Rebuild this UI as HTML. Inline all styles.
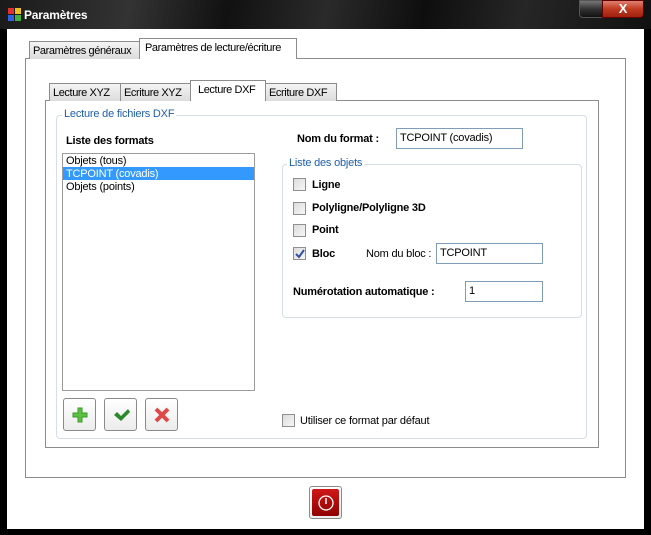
<!DOCTYPE html>
<html><head><meta charset="utf-8"><style>
*{margin:0;padding:0;box-sizing:border-box}
body{width:651px;height:535px;background:#000;position:relative;overflow:hidden;font-family:"Liberation Sans",sans-serif;font-size:11px;color:#000;letter-spacing:-0.2px}
.a{position:absolute}
.title{left:0;top:0;width:651px;height:29px;background:linear-gradient(100deg,#1a1a1a 0%,#333 20%,#111 35%,#2a2a2a 50%,#0e0e0e 65%,#262626 80%,#111 100%)}
.body{left:7px;top:29px;width:637px;height:500px;background:#fff}
.tab{border:1px solid #8c8c8c;border-bottom:none;background:linear-gradient(#f4f4f4,#dcdcdc);padding:3px 3px 0 3px;white-space:nowrap;height:18px;letter-spacing:-0.4px;overflow:hidden}
.tab.sel{background:#fff;height:21px;z-index:2}
.panel{border:1px solid #8c8c8c;background:#fff}
.grp{border:1px solid #d5dfe5;border-radius:4px}
.gt{background:#fff;color:#1f5faa;padding:0 2px}
.tb{border:1px solid #7f9db9;background:#fff;padding:3px 3px;height:21px;white-space:nowrap}
.cb{width:13px;height:13px;border:1px solid #8f8f8f;background:linear-gradient(135deg,#dcdcdc,#f6f6f6)}
b{font-weight:bold}
.btn{width:33px;height:33px;border:1px solid #8a8a8a;border-radius:3px;background:linear-gradient(#fff,#ececec);display:flex;align-items:center;justify-content:center}
</style></head><body>
<div class="a title"></div>
<div class="a" style="left:8px;top:8px;width:13px;height:13px;">
 <div class="a" style="left:0;top:0;width:6px;height:6px;background:#e03030"></div>
 <div class="a" style="left:7px;top:0;width:6px;height:6px;background:#f0c020"></div>
 <div class="a" style="left:0;top:7px;width:6px;height:6px;background:#3060e0"></div>
 <div class="a" style="left:7px;top:7px;width:6px;height:6px;background:#40b040"></div>
</div>
<div class="a" style="left:24px;top:8px;color:#fff;font-weight:bold;font-size:12px">Paramètres</div>
<div class="a" style="left:579px;top:0;width:24px;height:18px;background:linear-gradient(#777,#333 50%,#111);border:1px solid #555;border-radius:0 0 0 4px"></div>
<div class="a" style="left:602px;top:0;width:42px;height:18px;background:linear-gradient(#e08070,#c03a20 50%,#a02010);border:1px solid #600;border-radius:0 0 4px 0;color:#fff;font-weight:bold;font-size:13px;text-align:center;line-height:16px">X</div>
<div class="a body"></div>

<div class="a panel" style="left:25px;top:58px;width:601px;height:420px"></div>
<div class="a tab" style="left:29px;top:41px;width:111px">Paramètres généraux</div>
<div class="a tab sel" style="left:139px;top:38px;width:158px;padding-left:5px">Paramètres de lecture/écriture</div>

<div class="a panel" style="left:45px;top:100px;width:554px;height:348px"></div>
<div class="a tab" style="left:49px;top:83px;width:72px">Lecture XYZ</div>
<div class="a tab" style="left:120px;top:83px;width:71px">Ecriture XYZ</div>
<div class="a tab sel" style="left:190px;top:80px;width:76px;padding-left:7px">Lecture DXF</div>
<div class="a tab" style="left:265px;top:83px;width:72px">Ecriture DXF</div>

<div class="a grp" style="left:56px;top:115px;width:531px;height:324px"></div>
<div class="a gt" style="left:62px;top:108px">Lecture de fichiers DXF</div>
<div class="a" style="left:66px;top:135px"><b>Liste des formats</b></div>
<div class="a" style="left:62px;top:153px;width:193px;height:238px;border:1px solid #9c9c9c;background:#fff">
 <div style="padding:1px 3px;height:13px;line-height:12px">Objets (tous)</div>
 <div style="padding:1px 3px;height:13px;line-height:12px;background:#3399ff;color:#fff">TCPOINT (covadis)</div>
 <div style="padding:1px 3px;height:13px;line-height:12px">Objets (points)</div>
</div>
<div class="a btn" style="left:63px;top:398px"><svg width="18" height="18"><path d="M7 2h4v5h5v4h-5v5H7v-5H2V7h5z" fill="#5cc040" stroke="#3a9a2a" stroke-width="1"/></svg></div>
<div class="a btn" style="left:104px;top:398px"><svg width="18" height="18"><path d="M2 9l3-3 4 4 7-7 2 3-9 9z" fill="#2a8a2a"/></svg></div>
<div class="a btn" style="left:145px;top:398px"><svg width="18" height="18"><path d="M3 3l12 12M15 3L3 15" stroke="#e04848" stroke-width="4"/></svg></div>

<div class="a" style="left:297px;top:133px"><b>Nom du format :</b></div>
<div class="a tb" style="left:396px;top:128px;width:127px">TCPOINT (covadis)</div>

<div class="a grp" style="left:282px;top:164px;width:300px;height:154px"></div>
<div class="a gt" style="left:287px;top:157px">Liste des objets</div>
<div class="a cb" style="left:293px;top:178px"></div><div class="a" style="left:312px;top:179px"><b>Ligne</b></div>
<div class="a cb" style="left:293px;top:202px"></div><div class="a" style="left:312px;top:202px"><b>Polyligne/Polyligne 3D</b></div>
<div class="a cb" style="left:293px;top:224px"></div><div class="a" style="left:312px;top:224px"><b>Point</b></div>
<div class="a cb" style="left:293px;top:247px"><svg class="a" style="left:1px;top:1px" width="10" height="10"><path d="M1 5l3 3 5-7" stroke="#3050a0" stroke-width="2" fill="none"/></svg></div>
<div class="a" style="left:312px;top:248px"><b>Bloc</b></div>
<div class="a" style="left:366px;top:248px">Nom du bloc :</div>
<div class="a tb" style="left:436px;top:243px;width:107px">TCPOINT</div>
<div class="a" style="left:293px;top:286px"><b>Numérotation automatique :</b></div>
<div class="a tb" style="left:465px;top:281px;width:78px">1</div>

<div class="a cb" style="left:282px;top:414px"></div>
<div class="a" style="left:300px;top:415px">Utiliser ce format par défaut</div>

<div class="a btn" style="left:309px;top:486px;width:33px;height:33px"><div style="width:27px;height:27px;background:linear-gradient(#d01818,#900000);border-radius:2px;display:flex;align-items:center;justify-content:center"><svg width="18" height="18"><circle cx="9" cy="9" r="7" stroke="#fff" stroke-width="1.3" fill="none"/><path d="M9 4v6" stroke="#fff" stroke-width="1.5"/></svg></div></div>
</body></html>
